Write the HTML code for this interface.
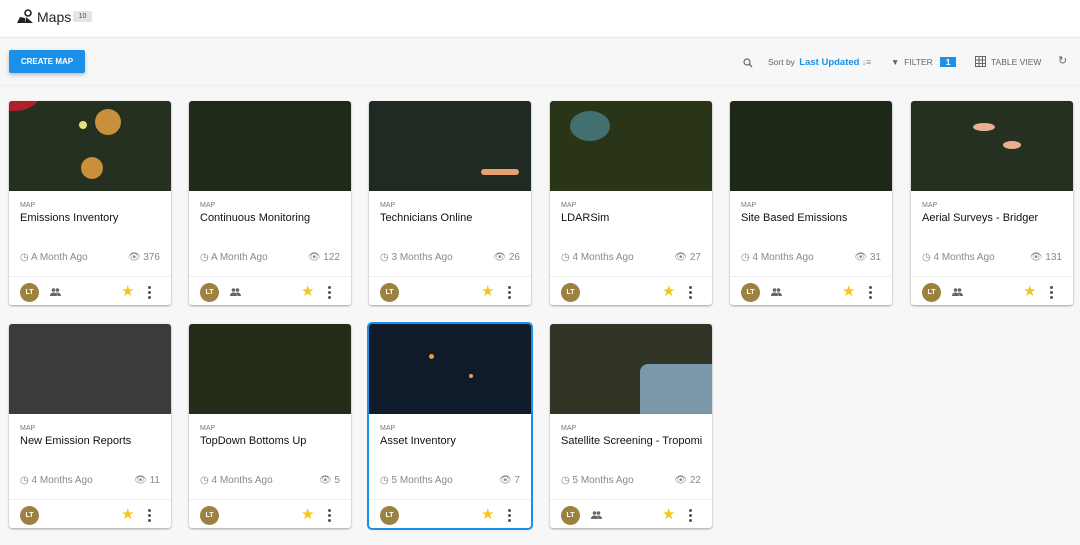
<!DOCTYPE html>
<html><head><meta charset="utf-8"><style>
*{box-sizing:border-box;margin:0;padding:0}
body{width:1080px;height:545px;background:#f7f7f7;font-family:"Liberation Sans",sans-serif;position:relative;overflow:hidden;color:#222}
.top{position:absolute;left:0;top:0;width:1080px;height:38px;background:#fff;border-bottom:1px solid #e8e8e8}
.top .t{position:absolute;left:37px;top:9px;font-size:14px;color:#222}
.badge{position:absolute;left:73px;top:11px;width:19px;height:11px;background:#e4e4e4;font-size:7px;color:#555;text-align:center;line-height:11px;border-radius:2px}
.hr{position:absolute;left:0;top:85px;width:1080px;height:1px;background:#eee}
.btn{position:absolute;left:9px;top:50px;width:76px;height:23px;background:#1a90e8;color:#fff;font-size:8px;font-weight:bold;text-align:center;line-height:23px;border-radius:2px;box-shadow:0 2px 4px rgba(0,0,0,.25)}
.tb{position:absolute;top:57px;font-size:8.5px;color:#666;white-space:nowrap}
.card{position:absolute;width:162px;height:204px;background:#fff;border-radius:3px;box-shadow:0 1px 2px rgba(0,0,0,.35);overflow:hidden}
.card.sel{outline:2px solid #1a90e8}
.img{height:90px;background:#1f2a18;position:relative;overflow:hidden}
.img b{position:absolute;border-radius:50%}
.lab{position:absolute;left:11px;top:101px;font-size:7px;color:#777}
.ttl{position:absolute;left:11px;top:111px;font-size:11px;color:#111;white-space:nowrap}
.dt{position:absolute;left:11px;top:151px;font-size:10px;color:#888}
.vw{position:absolute;right:11px;top:151px;font-size:10px;color:#888}
.ft{position:absolute;left:0;top:175px;width:162px;height:29px;border-top:1px solid #eee}
.av{position:absolute;left:11px;top:6px;width:19px;height:19px;border-radius:50%;background:#9c8140;color:#fff;font-size:7px;font-weight:bold;text-align:center;line-height:19px}
.grp{position:absolute;left:41px;top:11px}
.star{position:absolute;left:112px;top:5px;font-size:15px;color:#f5c518}
.dots{position:absolute;left:139px;top:9px;width:4px}
.dots i{display:block;width:3px;height:3px;border-radius:50%;background:#555;margin-bottom:2px}
</style></head><body>
<div class="top">
<svg style="position:absolute;left:16px;top:8px" width="18" height="16" viewBox="0 0 18 16"><path d="M1 15 L4 9 L9 10 L10 15 Z" fill="#222"/><circle cx="12" cy="5" r="3" fill="none" stroke="#222" stroke-width="1.6"/><path d="M10 9 L17 15 L10 15Z" fill="#222"/></svg>
<div class="t">Maps</div><div class="badge">10</div></div>
<div class="hr"></div>
<div class="btn">CREATE MAP</div>
<svg style="position:absolute;left:743px;top:58px" width="10" height="10"><circle cx="4" cy="4" r="3" fill="none" stroke="#666" stroke-width="1.2"/><line x1="6" y1="6" x2="9" y2="9" stroke="#666" stroke-width="1.3"/></svg>
<div class="tb" style="left:768px">Sort by <b style="color:#1a90e8;font-size:9.5px;margin-left:2px">Last Updated</b> <span style="color:#888">↓≡</span></div>
<div class="tb" style="left:891px">▼ &nbsp;FILTER <span style="display:inline-block;background:#1a90e8;color:#fff;width:16px;text-align:center;font-weight:bold;margin-left:5px">1</span></div>
<svg style="position:absolute;left:975px;top:56px" width="11" height="11"><rect x="0.5" y="0.5" width="10" height="10" fill="none" stroke="#666"/><path d="M0 4H11M0 7.5H11M4 0V11M7.5 0V11" stroke="#666"/></svg>
<div class="tb" style="left:991px">TABLE VIEW</div>
<div class="tb" style="left:1058px;font-size:11px;top:54px">↻</div>
<div id="c"></div>
<script>
var d=[["Emissions Inventory","A Month Ago","376",1,"#263020",'<b style="left:-20px;top:-20px;width:50px;height:30px;background:#b0202a"></b><b style="left:86px;top:8px;width:26px;height:26px;background:#c8903a"></b><b style="left:72px;top:56px;width:22px;height:22px;background:#c8903a"></b><b style="left:70px;top:20px;width:8px;height:8px;background:#e8e080"></b>'],["Continuous Monitoring","A Month Ago","122",1,"#1f2a18",''],["Technicians Online","3 Months Ago","26",0,"#1e2a22",'<b style="left:112px;top:68px;width:38px;height:6px;border-radius:3px;background:#e8a070"></b>'],["LDARSim","4 Months Ago","27",0,"#2a3518",'<b style="left:20px;top:10px;width:40px;height:30px;background:rgba(90,170,200,.5)"></b>'],["Site Based Emissions","4 Months Ago","31",1,"#1d2818",''],["Aerial Surveys - Bridger","4 Months Ago","131",1,"#253020",'<b style="left:62px;top:22px;width:22px;height:8px;background:#e8b090"></b><b style="left:92px;top:40px;width:18px;height:8px;background:#e8b090"></b>'],
["New Emission Reports","4 Months Ago","11",0,"#3a3c3c",''],["TopDown Bottoms Up","4 Months Ago","5",0,"#222c18",''],["Asset Inventory","5 Months Ago","7",0,"#0f1a2a",'<b style="left:60px;top:30px;width:5px;height:5px;background:#e8a040"></b><b style="left:100px;top:50px;width:4px;height:4px;background:#e8a040"></b>'],["Satellite Screening - Tropomi","5 Months Ago","22",1,"#303526",'<b style="left:90px;top:40px;width:80px;height:60px;border-radius:8px;background:#7a98aa"></b>']];
var xs=[9,189,369,550,730,911],h="";
var grp='<svg class="grp" width="11" height="8" viewBox="0 0 11 8"><circle cx="3.5" cy="2" r="1.8" fill="#666"/><circle cx="7.5" cy="2" r="1.8" fill="#666"/><path d="M0 8C0 5 2 4.5 3.5 4.5S7 5 7 8Z M6 4.6C7 4.4 11 4.6 11 8H7.8Z" fill="#666"/></svg>';
d.forEach(function(e,i){var x=xs[i%6],y=i<6?101:324;
h+='<div class="card'+(i==8?' sel':'')+'" style="left:'+x+'px;top:'+y+'px"><div class="img" style="background:'+e[4]+'">'+e[5]+'</div><div class="lab">MAP</div><div class="ttl">'+e[0]+'</div><div class="dt">◷ '+e[1]+'</div><div class="vw">👁 '+e[2]+'</div><div class="ft"><div class="av">LT</div>'+(e[3]?grp:'')+'<div class="star">★</div><div class="dots"><i></i><i></i><i></i></div></div></div>';});
document.getElementById('c').innerHTML=h;
</script>
</body></html>
